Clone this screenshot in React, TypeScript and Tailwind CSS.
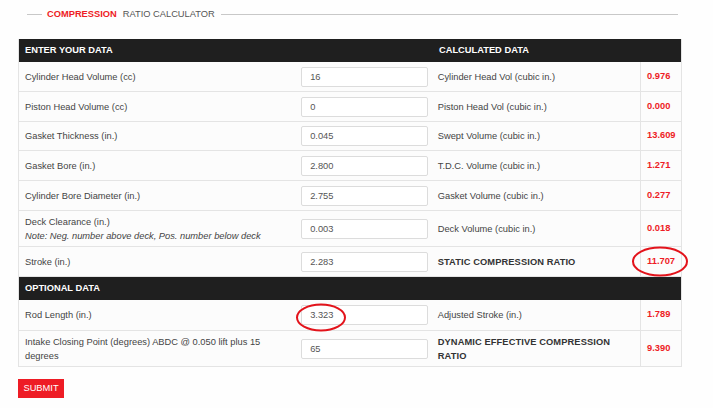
import React from 'react';

type Row = {
  label: React.ReactNode;
  value: string;
  calcLabel: React.ReactNode;
  calcValue: string;
  bold?: boolean;
  h: string;
};

const mainRows: Row[] = [
  { label: 'Cylinder Head Volume (cc)', value: '16', calcLabel: 'Cylinder Head Vol (cubic in.)', calcValue: '0.976', h: 'h-[30px]' },
  { label: 'Piston Head Volume (cc)', value: '0', calcLabel: 'Piston Head Vol (cubic in.)', calcValue: '0.000', h: 'h-[30px]' },
  { label: 'Gasket Thickness (in.)', value: '0.045', calcLabel: 'Swept Volume (cubic in.)', calcValue: '13.609', h: 'h-[29px]' },
  { label: 'Gasket Bore (in.)', value: '2.800', calcLabel: 'T.D.C. Volume (cubic in.)', calcValue: '1.271', h: 'h-[30px]' },
  { label: 'Cylinder Bore Diameter (in.)', value: '2.755', calcLabel: 'Gasket Volume (cubic in.)', calcValue: '0.277', h: 'h-[30px]' },
  {
    label: (
      <>
        Deck Clearance (in.)
        <br />
        <i>Note: Neg. number above deck, Pos. number below deck</i>
      </>
    ),
    value: '0.003',
    calcLabel: 'Deck Volume (cubic in.)',
    calcValue: '0.018',
    h: 'h-[36px]',
  },
  { label: 'Stroke (in.)', value: '2.283', calcLabel: 'STATIC COMPRESSION RATIO', calcValue: '11.707', bold: true, h: 'h-[30px]' },
];

const optionalRows: Row[] = [
  { label: 'Rod Length (in.)', value: '3.323', calcLabel: 'Adjusted Stroke (in.)', calcValue: '1.789', h: 'h-[31px]' },
  {
    label: (
      <>
        Intake Closing Point (degrees) ABDC @ 0.050 lift plus 15
        <br />
        degrees
      </>
    ),
    value: '65',
    calcLabel: (
      <>
        DYNAMIC EFFECTIVE COMPRESSION
        <br />
        RATIO
      </>
    ),
    calcValue: '9.390',
    bold: true,
    h: 'h-[36px]',
  },
];

function DataRow({ row }: Readonly<{ row: Row }>) {
  return (
    <div className={`flex items-stretch border-b border-[#e4e4e4] bg-[#fcfcfc] ${row.h}`}>
      <div className="w-[277px] flex items-center px-[6px] text-[#444] leading-[14px]">
        <div>{row.label}</div>
      </div>
      <div className="w-[137px] flex items-center pl-[6px]">
        <input
          type="text"
          defaultValue={row.value}
          className="w-[127px] h-[20px] border border-[#dcdcdc] rounded-[2px] bg-white px-[8px] text-[9.3px] text-[#555] outline-none"
        />
      </div>
      <div
        className={`w-[209px] flex items-center px-[6px] leading-[14px] ${
          row.bold ? 'font-bold text-[#333] tracking-[0.1px]' : 'text-[#444]'
        }`}
      >
        <div>{row.calcLabel}</div>
      </div>
      <div className="w-[41px] flex items-center pl-[6px] border-l border-[#e4e4e4] font-bold text-[#ee1c25]">
        {row.calcValue}
      </div>
    </div>
  );
}

function HeaderRow({ left, right }: Readonly<{ left: string; right?: string }>) {
  return (
    <div className="flex items-center h-[23px] bg-[#1f1f1f] text-white font-bold">
      <div className="w-[414px] px-[6px]">{left}</div>
      {right && <div className="px-[6px]">{right}</div>}
    </div>
  );
}

export default function App() {
  return (
    <div
      className="relative w-[713px] h-[408px] bg-[#fefefe] text-[9.3px] overflow-hidden"
      style={{ fontFamily: '"Liberation Sans", Arial, sans-serif' }}
    >
      {/* TITRE */}
      <div className="flex items-center h-[30px] pl-[27px] pr-[35px] pb-[1px]">
        <div className="w-[15px] h-px bg-[#c8c8c8]" />
        <span className="ml-[5px] font-bold text-[#ee1c25]">COMPRESSION</span>
        <span className="ml-[6px] text-[#555]">RATIO CALCULATOR</span>
        <div className="flex-1 ml-[6px] h-px bg-[#c8c8c8]" />
      </div>

      {/* TABLEAU */}
      <div className="ml-[18px] mt-[9px] w-[664px] border-l border-r border-[#e4e4e4]">
        <HeaderRow left="ENTER YOUR DATA" right="CALCULATED DATA" />
        {mainRows.map((r, i) => (
          <DataRow key={i} row={r} />
        ))}
        <HeaderRow left="OPTIONAL DATA" />
        {optionalRows.map((r, i) => (
          <DataRow key={i} row={r} />
        ))}
      </div>

      <button className="ml-[18px] mt-[12px] w-[46px] h-[19px] bg-[#ee1c25] text-white text-[9.3px]">
        SUBMIT
      </button>

      {/* ANNOTATIONS */}
      <svg className="absolute inset-0 pointer-events-none" width="713" height="408">
        <ellipse cx="660" cy="261.5" rx="27" ry="14" fill="none" stroke="#e3131b" strokeWidth="2" />
        <ellipse cx="321" cy="317.5" rx="24" ry="13" fill="none" stroke="#e3131b" strokeWidth="2" />
      </svg>
    </div>
  );
}
